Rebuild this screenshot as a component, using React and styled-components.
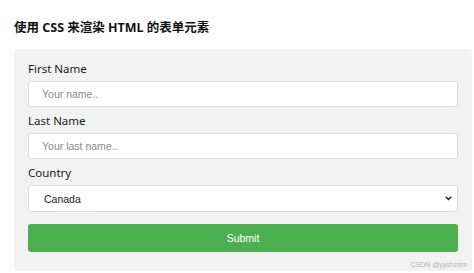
import React from 'react';
import styled, { createGlobalStyle } from 'styled-components';

const GlobalStyle = createGlobalStyle`
    body {
        margin: 0;
        background: #fff;
        font-family: 'Noto Sans', 'Noto Sans CJK SC', sans-serif;
        color: #222;
    }
`

const Page = styled.div`
    padding: 19px 2px 0 14px;
`

const Title = styled.h3`
    margin: 0 0 12px;
    font-size: 12.5px;
    line-height: 18px;
    font-weight: 700;
    color: #111;
`

const Panel = styled.form`
    position: relative;
    box-sizing: border-box;
    width: 458px;
    padding: 11px 14px 19px;
    background-color: #f2f2f2;
    border-radius: 4px;
`

const Label = styled.label`
    display: block;
    font-size: 11.5px;
    line-height: 18px;
    color: #1a1a1a;
`

const Field = styled.input`
    display: block;
    box-sizing: border-box;
    width: 100%;
    height: 26px;
    margin: 3px 0 5px;
    padding: 0 13px;
    border: 1px solid #dcdcdc;
    border-radius: 3px;
    background: #fff;
    font-family: 'Liberation Sans', Arial, sans-serif;
    font-size: 10.5px;
    outline: none;

    &::placeholder {
        color: #8a8a8a;
    }
`

const SelectWrap = styled.div`
    position: relative;
    margin-top: 3px;
`

const Select = styled.select`
    display: block;
    box-sizing: border-box;
    width: 100%;
    height: 27px;
    padding: 0 15px;
    border: 1px solid #dcdcdc;
    border-radius: 3px;
    background: #fff;
    font-family: 'Liberation Sans', Arial, sans-serif;
    font-size: 10.5px;
    color: #222;
    appearance: none;
    outline: none;
`

const Chevron = styled.svg`
    position: absolute;
    right: 6px;
    top: 11px;
    width: 7px;
    height: 5px;
    pointer-events: none;
`

const SubmitButton = styled.button`
    display: block;
    width: 100%;
    height: 28px;
    margin-top: 12px;
    border: none;
    border-radius: 3px;
    background-color: #4caf50;
    color: #fff;
    font-family: 'Liberation Sans', Arial, sans-serif;
    font-size: 10.5px;
`

const Watermark = styled.span`
    position: absolute;
    right: 5px;
    bottom: 3px;
    font-family: 'Liberation Sans', Arial, sans-serif;
    font-size: 7px;
    color: #b5b5b5;
`

const App = () => {
    return (
        <>
            <GlobalStyle />
            <Page>
                <Title>使用 CSS 来渲染 HTML 的表单元素</Title>
                <Panel onSubmit={ev => ev.preventDefault()}>
                    <Label htmlFor='fname'>First Name</Label>
                    <Field id='fname' type='text' placeholder='Your name..' />
                    <Label htmlFor='lname'>Last Name</Label>
                    <Field id='lname' type='text' placeholder='Your last name..' />
                    <Label htmlFor='country'>Country</Label>
                    <SelectWrap>
                        <Select id='country' defaultValue='canada'>
                            <option value='australia'>Australia</option>
                            <option value='canada'>Canada</option>
                            <option value='usa'>USA</option>
                        </Select>
                        <Chevron viewBox='0 0 7 5'>
                            <path d='M0.8 0.8 L3.5 3.6 L6.2 0.8' fill='none' stroke='#222' strokeWidth='1.4' />
                        </Chevron>
                    </SelectWrap>
                    <SubmitButton type='submit'>Submit</SubmitButton>
                    <Watermark>CSDN @yyshzdm</Watermark>
                </Panel>
            </Page>
        </>
    )
}

export default App;
